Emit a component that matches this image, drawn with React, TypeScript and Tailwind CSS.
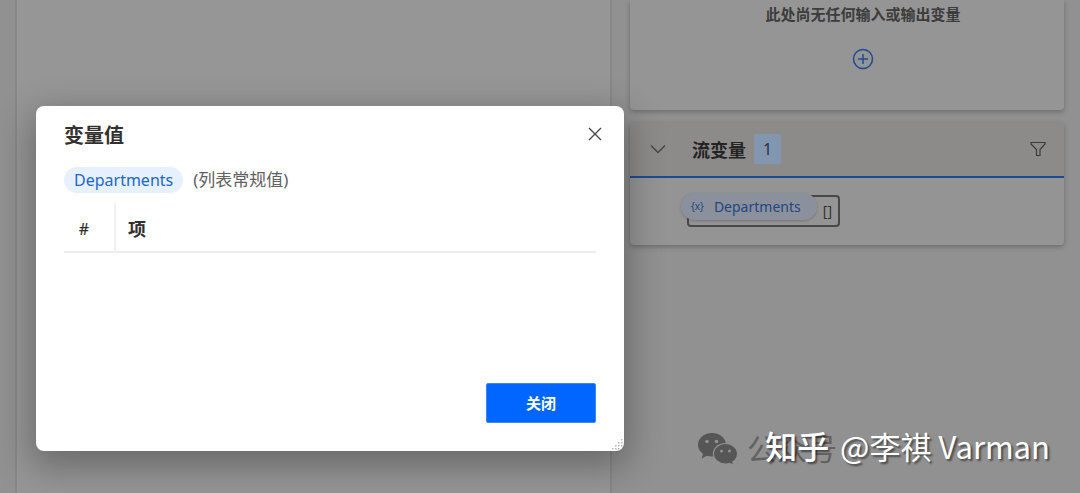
import { useState } from 'react';

const variables = [
    { name: 'Departments', value: '[]' },
]

function WeChatIcon() {
    return (
        <svg viewBox="0 0 42 34" className="w-[42px] h-[34px]" aria-hidden="true">
            <path d="M15 1C7 1 1 6.200 1 12.800c0 3.700 2 7 5 9.200L4.700 26.500l5-2.700c1.700.5 3.500.7 5.300.7C23 24.500 29 19.300 29 12.800S23 1 15 1Z" fill="#565656" />
            <path d="M28.500 11.500c-6.800 0-12 4.500-12 10.200s5.200 10.300 12 10.300c1.500 0 3-.2 4.300-.6l4 2-1-3.500c2.900-1.900 4.700-4.800 4.700-8.200 0-5.700-5.200-10.200-12-10.200Z" fill="#565656" stroke="#919191" strokeWidth="1.200" />
            <circle cx="10" cy="9.500" r="1.800" fill="#919191" />
            <circle cx="19.500" cy="9.500" r="1.800" fill="#919191" />
            <circle cx="24.500" cy="19" r="1.500" fill="#919191" />
            <circle cx="32.500" cy="19" r="1.500" fill="#919191" />
        </svg>
    )
}

function VariablesPanel() {
    return (
        <aside className="w-[434px] mr-4 ml-[18px] shrink-0">
            {/* Input / output variables */}
            <section className="flex flex-col items-center h-[110px] pt-1 pl-8 rounded-b bg-[#959595] shadow-[0_2px_5px_rgba(0,0,0,0.25)]">
                <p className="text-[15px] leading-5 font-bold text-[#3c3c3c]">此处尚无任何输入或输出变量</p>
                <button type="button" aria-label="添加变量" className="mt-6">
                    <svg viewBox="0 0 22 22" className="size-[22px]" fill="none" stroke="#204a91" strokeWidth="1.500">
                        <circle cx="11" cy="11" r="9.500" />
                        <path d="M11 6v10M6 11h10" />
                    </svg>
                </button>
            </section>

            {/* Flow variables */}
            <section className="mt-3 rounded bg-[#949494] shadow-[0_2px_5px_rgba(0,0,0,0.25)]">
                <header className="flex items-center h-14 pl-5 pr-[18px] rounded-t bg-[#8d8b89] border-b-2 border-[#1d4b93]">
                    <button type="button" aria-label="折叠">
                        <svg viewBox="0 0 16 16" className="size-4" fill="none" stroke="#444444" strokeWidth="1.300">
                            <path d="M1 4.500l7 7 7-7" />
                        </svg>
                    </button>
                    <h2 className="ml-[26px] pt-0.5 text-[18px] leading-6 font-bold text-[#242424]">流变量</h2>
                    <span className="ml-2 flex items-center justify-center w-[27px] h-[30px] rounded-xs bg-[#8296b0] text-base text-[#263448]">{variables.length}</span>
                    <button type="button" aria-label="筛选" className="ml-auto">
                        <svg viewBox="0 0 16 16" className="size-4" fill="none" stroke="#3b3b3b" strokeWidth="1.200">
                            <path d="M1 1.500h14v1.500L10 8.500V14.500H6.500V8.500L1 3Z" />
                        </svg>
                    </button>
                </header>
                <ul className="pt-4 pb-[18px] pl-[57px]">
                    {variables.map((variable) => (
                        <li key={variable.name} className="relative w-[153px] h-8 mt-px flex items-center justify-end pr-1.5 rounded-sm border-2 border-[#484848] text-sm text-[#333333]">
                            <button type="button" className="absolute -top-1 -left-2 flex items-center gap-2.5 h-[27px] w-[136px] pl-2.5 rounded-full bg-[#8a919c] shadow-[0_1px_3px_rgba(0,0,0,0.2)] text-sm text-[#24457f]">
                                <span className="text-[10px]">{'{x}'}</span>
                                {variable.name}
                            </button>
                            {variable.value}
                        </li>
                    ))}
                </ul>
            </section>
        </aside>
    )
}

function ValueDialog({ onClose }: { onClose: () => void }) {
    return (
        <div role="dialog" aria-labelledby="dialog-title"
            className="absolute left-9 top-[106px] w-[588px] flex flex-col px-7 pt-4 pb-7 rounded-lg bg-white shadow-[0_12px_36px_4px_rgba(0,0,0,0.3)]">
            <header className="flex items-start justify-between -mr-1.5">
                <h1 id="dialog-title" className="text-xl leading-7 font-bold text-[#323130]">变量值</h1>
                <button type="button" aria-label="关闭对话框" onClick={onClose} className="mt-[5px]">
                    <svg viewBox="0 0 14 14" className="size-3.5" fill="none" stroke="#444444" strokeWidth="1.300">
                        <path d="M1 1l12 12M13 1L1 13" />
                    </svg>
                </button>
            </header>
            <div className="mt-[17px] flex items-center gap-2.5 leading-[26px]">
                <span className="px-2.5 rounded-full bg-[#e6f0ff] text-base leading-[26px] text-[#2268c4]">Departments</span>
                <span className="text-[17px] leading-[26px] text-[#616161]">(列表常规值)</span>
            </div>
            <table className="mt-2.5 w-full text-left text-[#323130]">
                <thead>
                    <tr className="h-[49px] border-b-2 border-[#ededed]">
                        <th scope="col" className="w-[51px] pt-1 pr-2.5 border-r-2 border-[#f1f1f1] text-center text-base font-medium">#</th>
                        <th scope="col" className="pt-1 pl-3 text-lg font-bold">项</th>
                    </tr>
                </thead>
                <tbody></tbody>
            </table>
            <button type="button" onClick={onClose} className="mt-[130px] self-end w-[110px] h-10 rounded-xs border border-[#3d86ef] bg-[#0066ff] text-[15px] font-bold text-white">关闭</button>
            <svg viewBox="0 0 12 12" className="absolute right-0 bottom-0 size-3" fill="#b5b5b5" aria-hidden="true">
                <path d="M9 0h1.500v1.500H9zM6 3h1.500v1.500H6zM9 3h1.500v1.500H9zM3 6h1.500v1.500H3zM6 6h1.500v1.500H6zM9 6h1.500v1.500H9zM0 9h1.500v1.500H0zM3 9h1.500v1.500H3zM6 9h1.500v1.500H6z" />
            </svg>
        </div>
    )
}

function App() {
    const [open, setOpen] = useState(true)

    return (
        <main className="relative flex min-h-screen overflow-hidden bg-[#919191] font-['Noto_Sans','Noto_Sans_CJK_SC',sans-serif]">
            <div className="flex-1 ml-[15px] border-x-2 border-[#888888] bg-[#969696]"></div>
            <VariablesPanel />
            {open && <ValueDialog onClose={() => setOpen(false)} />}

            {/* Watermark */}
            <div className="absolute right-[30px] bottom-[22px] flex items-center h-11 whitespace-nowrap font-['Noto_Sans_CJK_SC',sans-serif] text-[30px]">
                <WeChatIcon />
                <span className="ml-2 self-start leading-10 text-[#626262]">公众号</span>
                <p className="absolute right-0 top-0 text-[31px] leading-9 text-white [text-shadow:2px_2px_2px_rgba(0,0,0,0.5)]">
                    <span className="mr-1 text-[32px] leading-9 font-medium">知乎</span> @李祺 Varman
                </p>
                <span className="w-[213px]"></span>
            </div>
        </main>
    )
}

export default App
